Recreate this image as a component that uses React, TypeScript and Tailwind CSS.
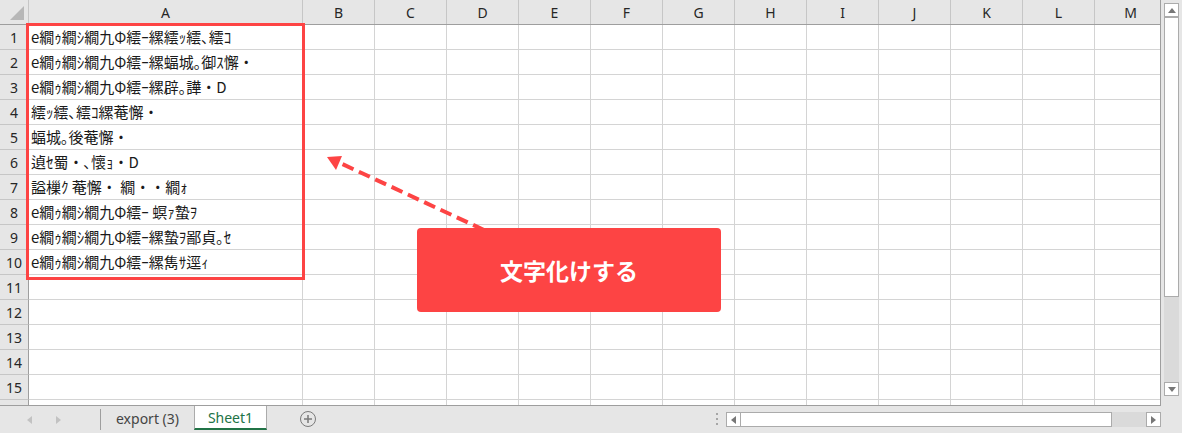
import React from "react";

const COLS = ["B", "C", "D", "E", "F", "G", "H", "I", "J", "K", "L", "M"];

const ROWS: string[] = [
  "e繝ｩ繝ｼ繝九Φ繧ｰ縲繧ｯ繧､繧ｺ",
  "e繝ｩ繝ｼ繝九Φ繧ｰ縲蝠城｡御ｽ懈・",
  "e繝ｩ繝ｼ繝九Φ繧ｰ縲辟｡譁・D",
  "繧ｯ繧､繧ｺ縲菴懈・",
  "蝠城｡後菴懈・",
  "遉ｾ蜀・､懷ｮ・D",
  "謚樔ｸ 菴懈・ 繝・・繝ｫ",
  "e繝ｩ繝ｼ繝九Φ繧ｰ 螟ｧ蟄ｦ",
  "e繝ｩ繝ｼ繝九Φ繧ｰ縲蟄ｦ鄙貞｡ｾ",
  "e繝ｩ繝ｼ繝九Φ繧ｰ縲雋ｻ逕ｨ",
  "",
  "",
  "",
  "",
  "",
];

function HeaderRow() {
  return (
    <div className="flex h-[25px] shrink-0 bg-[#e6e6e6] border-b border-[#9e9e9e] font-['Noto_Sans',sans-serif] text-[14px] text-[#262626]">
      <div className="relative w-[29px] shrink-0 border-r border-[#c6c6c6]">
        <svg className="absolute left-0 top-0" width="28" height="24">
          <polygon points="24,6 24,20 10,20" fill="#b7b7b7" />
        </svg>
      </div>
      <div className="w-[274px] shrink-0 border-r border-[#c6c6c6] flex items-center justify-center">
        A
      </div>
      {COLS.map((c) => (
        <div
          key={c}
          className="w-[72px] shrink-0 border-r border-[#c6c6c6] flex items-center justify-center"
        >
          {c}
        </div>
      ))}
    </div>
  );
}

function Row({ n, text }: { n: number; text: string }) {
  return (
    <div className="flex h-[25px] shrink-0 border-b border-[#d4d4d4]">
      <div className="w-[29px] shrink-0 bg-[#e6e6e6] border-r border-[#9e9e9e] flex items-center justify-center font-['Noto_Sans',sans-serif] text-[14px] text-[#262626] -mb-px border-b border-b-[#c6c6c6]">
        {n}
      </div>
      <div className="w-[274px] shrink-0 border-r border-[#d4d4d4] pl-[2px] flex items-center whitespace-nowrap font-['Noto_Sans_CJK_JP',sans-serif] text-[15px] text-[#1a1a1a]">
        {text}
      </div>
      {COLS.map((c) => (
        <div key={c} className="w-[72px] shrink-0 border-r border-[#d4d4d4]" />
      ))}
    </div>
  );
}

function VScroll() {
  return (
    <div className="w-[21px] shrink-0 flex flex-col pl-[3px] pr-[3px] pt-[3px] pb-[10px]">
      <div className="h-[14px] bg-white border border-[#ababab] flex items-center justify-center">
        <svg width="8" height="5">
          <polygon points="0,5 8,5 4,0" fill="#777" />
        </svg>
      </div>
      <div className="h-[280px] bg-white border border-[#ababab]" />
      <div className="flex-1 bg-[#dadada]" />
      <div className="h-[14px] bg-white border border-[#ababab] flex items-center justify-center">
        <svg width="8" height="5">
          <polygon points="0,0 8,0 4,5" fill="#777" />
        </svg>
      </div>
    </div>
  );
}

function TabBar() {
  return (
    <div className="flex h-[27px] items-stretch bg-[#e6e6e6] font-['Noto_Sans',sans-serif] text-[14px]">
      <div className="w-[100px] flex items-center pl-[27px] gap-[24px]">
        <svg width="5" height="8">
          <polygon points="5,0 5,8 0,4" fill="#c2c2c2" />
        </svg>
        <svg width="5" height="8">
          <polygon points="0,0 0,8 5,4" fill="#c2c2c2" />
        </svg>
      </div>
      <div className="w-px bg-[#9e9e9e] my-[3px]" />
      <div className="w-[93px] flex items-center justify-center text-[#444] pb-[2px]">
        export (3)
      </div>
      <div className="w-[73px] h-[24px] bg-white border-x border-[#ababab] border-b-2 border-b-[#217346] flex items-center justify-center text-[#217346]">
        Sheet1
      </div>
      <div className="w-[33px]" />
      <div className="flex items-center pb-[1px]">
        <div className="w-[16px] h-[16px] rounded-full border-[1.5px] border-[#7a7a7a] flex items-center justify-center">
          <svg width="8" height="8">
            <rect x="3.25" y="0" width="1.5" height="8" fill="#7a7a7a" />
            <rect x="0" y="3.25" width="8" height="1.5" fill="#7a7a7a" />
          </svg>
        </div>
      </div>
      <div className="flex-1" />
      <div className="w-[16px] flex flex-col items-center justify-center gap-[3px] pb-[1px] mr-[1px]">
        <div className="w-[2px] h-[2px] bg-[#a6a6a6]" />
        <div className="w-[2px] h-[2px] bg-[#a6a6a6]" />
        <div className="w-[2px] h-[2px] bg-[#a6a6a6]" />
      </div>
      <div className="w-[435px] flex items-start pt-[6px]">
        <div className="w-[15px] h-[15px] bg-white border border-[#ababab] flex items-center justify-center">
          <svg width="5" height="8">
            <polygon points="5,0 5,8 0,4" fill="#777" />
          </svg>
        </div>
        <div className="w-[371px] h-[15px] bg-white border-y border-r border-[#ababab]" />
        <div className="flex-1 h-[15px] bg-[#dadada]" />
        <div className="w-[15px] h-[15px] bg-white border border-[#ababab] flex items-center justify-center">
          <svg width="5" height="8">
            <polygon points="0,0 0,8 5,4" fill="#777" />
          </svg>
        </div>
      </div>
      <div className="w-[21px]" />
    </div>
  );
}

export default function App() {
  return (
    <div className="relative w-[1182px] h-[433px] overflow-hidden bg-[#e6e6e6] flex flex-col">
      <div className="flex h-[406px] shrink-0">
        <div className="w-[1161px] shrink-0 overflow-hidden flex flex-col bg-white border-r border-b border-[#9e9e9e]">
          <HeaderRow />
          {ROWS.map((t, i) => (
            <Row key={i} n={i + 1} text={t} />
          ))}
          <div className="flex flex-1">
            <div className="w-[29px] shrink-0 bg-[#e6e6e6] border-r border-[#9e9e9e]" />
            <div className="w-[274px] shrink-0 border-r border-[#d4d4d4]" />
            {COLS.map((c) => (
              <div key={c} className="w-[72px] shrink-0 border-r border-[#d4d4d4]" />
            ))}
          </div>
        </div>
        <VScroll />
      </div>
      <TabBar />

      {/* highlight + callout */}
      <div className="absolute left-[26px] top-[23px] w-[279px] h-[257px] border-[3px] border-[#fd4444]" />
      <svg className="absolute left-0 top-0 pointer-events-none" width="1182" height="433">
        <line
          x1="484"
          y1="230"
          x2="338"
          y2="162"
          stroke="#fd4444"
          strokeWidth="4"
          strokeDasharray="12 6"
        />
        <polygon points="327,157 342,156 336,170" fill="#fd4444" />
      </svg>
      <div className="absolute left-[417px] top-[228px] w-[304px] h-[84px] rounded-[4px] bg-[#fd4444] flex items-center justify-center text-white font-bold text-[23px] font-['Noto_Sans_CJK_JP',sans-serif]">
        文字化けする
      </div>
    </div>
  );
}
